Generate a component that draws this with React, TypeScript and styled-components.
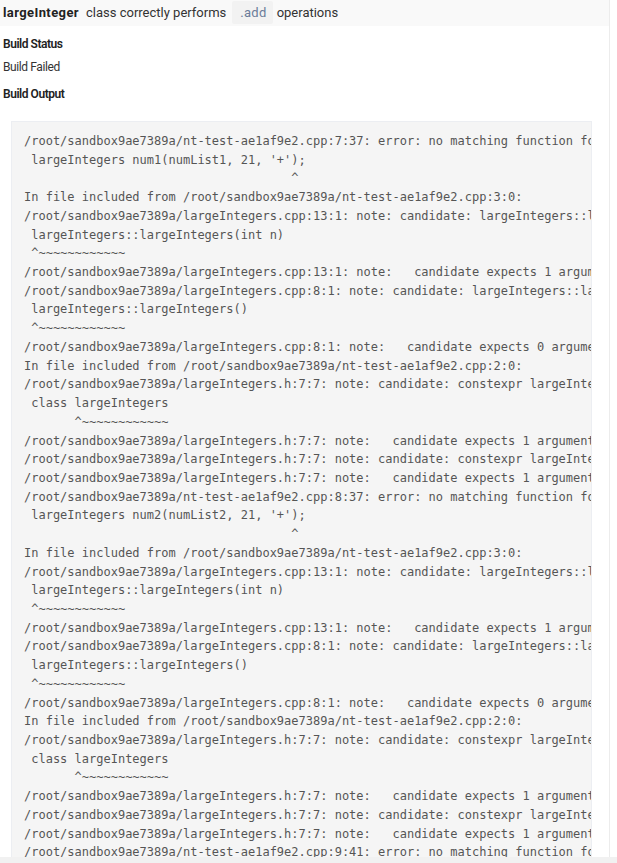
import React from "react";
import styled, { createGlobalStyle } from "styled-components";

const Global = createGlobalStyle`
  html, body { margin: 0; padding: 0; background: #ffffff; }
  body { font-family: Roboto, "Noto Sans", Arial, sans-serif; color: #333; }
  #root { height: 863px; display: flex; flex-direction: column; overflow: hidden; }
`;

const Main = styled.div`
  flex: 1;
  min-height: 0;
  overflow: hidden;
  display: flex;
`;

const Panel = styled.section`
  width: 609px;
  border-right: 1px solid #ececec;
  display: flex;
  flex-direction: column;
  min-height: 0;
`;

const Header = styled.div`
  flex: none;
  background: #f9f9f9;
  height: 26px;
  padding: 0 3px 2px 3px;
  box-sizing: border-box;
  display: flex;
  align-items: center;
  font-size: 13px;
  color: #333;
  white-space: nowrap;
`;

const Strong = styled.b`
  font-weight: 700;
  color: #222;
  letter-spacing: 0.4px;
  margin-right: 7px;
`;

const InlineCode = styled.code`
  font-family: Roboto, "Noto Sans", sans-serif;
  font-size: 13px;
  color: #6b7c99;
  background: #f2f2f2;
  padding: 4px 6px 4px 8px;
  margin: 0 4px 0 6px;
  border-radius: 2px;
  letter-spacing: 0.3px;
`;

const Body = styled.div`
  flex: none;
  padding: 10px 3px 0 3px;
  display: flex;
  flex-direction: column;
`;

const Label = styled.div<{ $mt?: number }>`
  font-size: 12px;
  font-weight: 600;
  color: #222;
  line-height: 17px;
  letter-spacing: -0.45px;
  margin-top: ${(p) => p.$mt ?? 0}px;
`;

const Value = styled.div`
  font-size: 12px;
  color: #333;
  line-height: 17px;
  letter-spacing: -0.4px;
  margin-top: 6px;
`;

const Pre = styled.pre`
  margin: 18px 0 0 8px;
  width: 555px;
  background: #f5f5f5;
  border: 1px solid #eceef2;
  padding: 10px 12px;
  font-family: "DejaVu Sans Mono", "Liberation Mono", monospace;
  font-size: 12px;
  line-height: 18.72px;
  color: #555;
  overflow: hidden;
  white-space: pre;
`;

const Footer = styled.div`
  height: 6px;
  background: #f1f1f1;
  flex: none;
`;

const P = "/root/sandbox9ae7389a/";
const TILDES = "~".repeat(12);

const block = (line: number, col: number, name: string, list: string) => [
  `${P}nt-test-ae1af9e2.cpp:${line}:${col}: error: no matching function for call to 'largeIntegers::largeIntegers(int [21], int, char)'`,
  ` largeIntegers ${name}(${list}, 21, '+');`,
  " ".repeat(col) + "^",
  `In file included from ${P}nt-test-ae1af9e2.cpp:3:0:`,
  `${P}largeIntegers.cpp:13:1: note: candidate: largeIntegers::largeIntegers(int)`,
  " largeIntegers::largeIntegers(int n)",
  " ^" + TILDES,
  `${P}largeIntegers.cpp:13:1: note:   candidate expects 1 argument, 3 provided`,
  `${P}largeIntegers.cpp:8:1: note: candidate: largeIntegers::largeIntegers()`,
  " largeIntegers::largeIntegers()",
  " ^" + TILDES,
  `${P}largeIntegers.cpp:8:1: note:   candidate expects 0 arguments, 3 provided`,
  `In file included from ${P}nt-test-ae1af9e2.cpp:2:0:`,
  `${P}largeIntegers.h:7:7: note: candidate: constexpr largeIntegers::largeIntegers(const largeIntegers&)`,
  " class largeIntegers",
  "       ^" + TILDES,
  `${P}largeIntegers.h:7:7: note:   candidate expects 1 argument, 3 provided`,
  `${P}largeIntegers.h:7:7: note: candidate: constexpr largeIntegers::largeIntegers(largeIntegers&&)`,
  `${P}largeIntegers.h:7:7: note:   candidate expects 1 argument, 3 provided`,
];

const output = [
  ...block(7, 37, "num1", "numList1"),
  ...block(8, 37, "num2", "numList2"),
  ...block(9, 41, "num3", "numList3"),
].join("\n");

export default function App() {
  return (
    <>
      <Global />
      <Main>
        <Panel>
          <Header>
            <Strong>largeInteger</Strong>
            class correctly performs
            <InlineCode>.add</InlineCode>
            operations
          </Header>
          <Body>
            <Label>Build Status</Label>
            <Value>Build Failed</Value>
            <Label $mt={10}>Build Output</Label>
            <Pre>{output}</Pre>
          </Body>
        </Panel>
      </Main>
      <Footer />
    </>
  );
}
